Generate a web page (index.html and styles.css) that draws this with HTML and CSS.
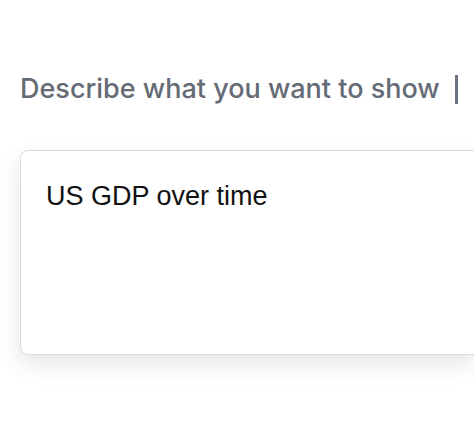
FILE: index.html
```html
<!DOCTYPE html>
<html lang="en">
<head>
    <meta charset="UTF-8">
    <meta name="viewport" content="width=device-width, initial-scale=1.0">
    <title>Describe chart</title>
    <link rel="stylesheet" href="styles.css">
</head>
<body>

    <main class="prompt">
        <div class="prompt-label">
            <span>Describe what you want to show</span>
            <span class="caret"></span>
        </div>

        <div class="prompt-box">
            US GDP over time
        </div>
    </main>

</body>
</html>
```

FILE: styles.css
```css
html, body {
    margin: 0;
    padding: 0;
    background-color: #fff;
    overflow: hidden;
}

body {
    font-family: Inter, "Liberation Sans", Arial, sans-serif;
    width: 474px;
    height: 424px;
}

.prompt {
    padding: 71px 0 0 20px;
}

.prompt-label {
    display: flex;
    align-items: center;
    color: #656b75;
    font-size: 27px;
    font-weight: 500;
    line-height: 36px;
}

.caret {
    display: inline-block;
    width: 3px;
    height: 29px;
    margin-left: 15px;
    background-color: #6b7280;
}

/* box runs off the right side of the frame, so no right border */
.prompt-box {
    margin-top: 43px;
    height: 205px;
    box-sizing: border-box;
    padding: 27px 25px;
    border: 1px solid #dcdcdc;
    border-right: none;
    border-radius: 8px 0 0 8px;
    background-color: #fff;
    box-shadow: 0 10px 24px rgba(0, 0, 0, 0.1);
    color: #111;
    font-family: "Liberation Sans", Arial, sans-serif;
    font-size: 27px;
    line-height: 36px;
}
```
